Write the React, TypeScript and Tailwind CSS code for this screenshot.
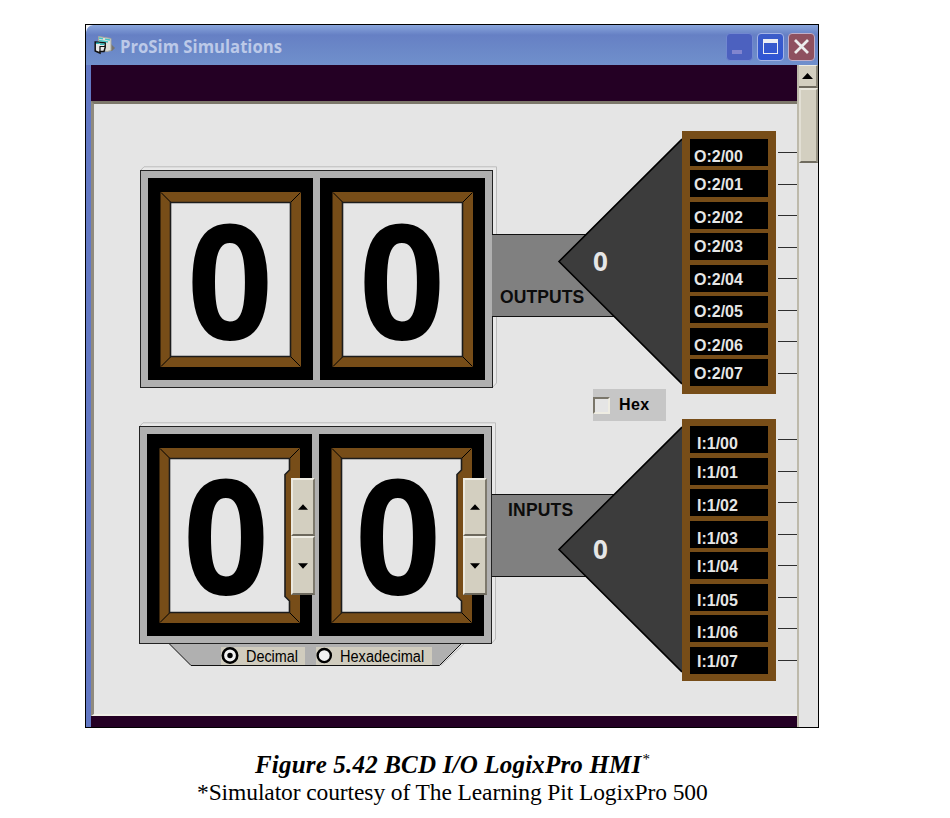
import clsx from "clsx";

interface Terminal {
  name: string;
  offset: string;
}

const outputTerminals: Terminal[] = [
  { name: "O:2/00", offset: "pt-[9px]" },
  { name: "O:2/01", offset: "pt-[6px]" },
  { name: "O:2/02", offset: "pt-[7px]" },
  { name: "O:2/03", offset: "pt-[5px]" },
  { name: "O:2/04", offset: "pt-[6px]" },
  { name: "O:2/05", offset: "pt-[7px]" },
  { name: "O:2/06", offset: "pt-[9px]" },
  { name: "O:2/07", offset: "pt-[6px]" },
];

const inputTerminals: Terminal[] = [
  { name: "I:1/00", offset: "pt-[9px]" },
  { name: "I:1/01", offset: "pt-[6px]" },
  { name: "I:1/02", offset: "pt-[8px]" },
  { name: "I:1/03", offset: "pt-[9px]" },
  { name: "I:1/04", offset: "pt-[6px]" },
  { name: "I:1/05", offset: "pt-[8px]" },
  { name: "I:1/06", offset: "pt-[9px]" },
  { name: "I:1/07", offset: "pt-[6px]" },
];

function AppIcon() {
  return (
    <svg width="23" height="20" viewBox="0 0 23 20">
      <path d="M18 9l4 4-3 3h-3z" fill="#77746e" />
      <path d="M5.500 1.500L18 3.500V15.500L14 16.500L5.500 14z" fill="#deddd8" stroke="#a5a79f" />
      <path d="M6 3l4 .8M12 4.200l5 .8M6 5.500l9 1.500" stroke="#3fc4c6" strokeWidth="1.3" />
      <path d="M2.200 7L12.200 8V12.500L11 16.500H7V18L2.200 16z" fill="#e8e8e8" stroke="#111" strokeWidth="1.5" />
      <path d="M3 8.200h3.500M7 9.300h4.500" stroke="#2fb9bb" strokeWidth="1.400" />
      <path d="M6.500 11.500H12M7 11.500v5" stroke="#111" strokeWidth="1.200" />
    </svg>
  );
}

function TitleBar() {
  return (
    <div className="relative flex h-[40px] items-center bg-linear-to-b from-[#8aa6dc] via-[#6680c4] via-25% to-[#7090cc] pr-[3px] pl-[7px]">
      <svg className="absolute top-0 left-0" width="7" height="7" viewBox="0 0 7 7">
        <path d="M0 0H7Q1 1 0 7z" fill="#f2f3f6" />
      </svg>
      <AppIcon />
      <span className="ml-[4px] grow origin-left scale-x-[0.953] pt-[3px] font-['Open_Sans'] text-[17.5px] font-bold whitespace-nowrap text-[#bcc9e8]">
        ProSim Simulations
      </span>
      <div className="flex gap-[4px] pt-[3px]">
        <div className="relative h-[28px] w-[27px] rounded-[4px] border border-[#7187d0] bg-[#4c61bf]">
          <div className="absolute bottom-[6px] left-[5px] h-[4px] w-[10px] bg-[#8185cf]" />
        </div>
        <div className="flex h-[28px] w-[27px] items-center justify-center rounded-[4px] border border-[#a4b4e6] bg-linear-to-b from-[#3c5cc8] to-[#2f55d4]">
          <div className="h-[15px] w-[15px] border border-t-4 border-[#eceef4]" />
        </div>
        <div className="flex h-[28px] w-[27px] items-center justify-center rounded-[4px] border border-[#c0aec8] bg-[#8e505f]">
          <svg width="17" height="17" viewBox="0 0 17 17">
            <path d="M2 2l13 13M15 2L2 15" stroke="#ececec" strokeWidth="2.8" />
          </svg>
        </div>
      </div>
    </div>
  );
}

function ScrollBar() {
  return (
    <div className="flex w-[21px] flex-col border-l-2 border-[#bdb9aa] bg-[#e4e4e4]">
      <div className="flex h-[23px] items-center justify-center border-t border-r-2 border-b-2 border-t-[#eeece2] border-r-[#8c887a] border-b-[#6f6b5f] bg-[#d3cfc0]">
        <svg width="11" height="6" viewBox="0 0 11 6">
          <path d="M5.5 0L11 6H0z" fill="#000" />
        </svg>
      </div>
      <div className="h-[75px] border-t-2 border-r-2 border-b-2 border-l-2 border-t-[#e8e6dc] border-r-[#9a9688] border-b-[#6f6b5f] border-l-[#e2dfd4] bg-[#d3cfc0]" />
    </div>
  );
}

function SpinButton({ down }: { down?: boolean }) {
  return (
    <button
      className={clsx(
        "flex w-[24px] items-center justify-center border-2 border-t-[#efede4] border-r-[#7d796c] border-b-[#6d695d] border-l-[#ebe9df] bg-[#d3cfc0]",
        down ? "h-[59px]" : "h-[58px]"
      )}
    >
      <svg width="10" height="6" viewBox="0 0 10 6">
        <path d={down ? "M0 .3h10L5 5.7z" : "M5 .3L10 5.7H0z"} fill="#000" />
      </svg>
    </button>
  );
}

function DigitPanel({ value, spin }: { value: number; spin?: boolean }) {
  return (
    <div className="relative h-[202px] w-[165px] bg-black">
      <svg className="absolute inset-0" width="165" height="202" viewBox="0 0 165 202">
        <rect x="12.5" y="14" width="140.5" height="175" fill="#774d18" />
        <path
          d="M13 14.5l10 10M152.5 14.5l-10 10M13 188.5l10-10M152.5 188.5l-10-10"
          stroke="#000"
          strokeWidth="1"
        />
        <path
          d={
            spin
              ? "M22.5 24.5H142.500V36L138 40.500V162.500L142.500 167V178.500H22.500Z"
              : "M22.5 24.5H142.500V178.500H22.500Z"
          }
          fill="#e5e5e5"
          stroke="#1c1c1c"
          strokeWidth="1.6"
        />
      </svg>
      <div
        className={clsx(
          "absolute w-[100px] scale-x-[0.94] text-center font-['Noto_Sans'] text-[160px] leading-[202px] font-bold text-black",
          spin ? "-top-[3px] left-[29px]" : "-top-[2px] left-[32px]"
        )}
      >
        {value}
      </div>
      {spin && (
        <div className="absolute top-[44px] left-[144px] z-10 flex flex-col">
          <SpinButton />
          <SpinButton down />
        </div>
      )}
    </div>
  );
}

function DigitDisplay({ spin }: { spin?: boolean }) {
  return (
    <div className="relative h-[218px] w-[353px]">
      <svg className="absolute -top-[4px] left-0" width="358" height="222" viewBox="0 0 358 222">
        <path d="M.5 4.500L4 .8H356.500V217L352.500 221.500V4.500Z" fill="#e9e9e9" stroke="#bcbcbc" />
      </svg>
      <div className="relative flex gap-[7px] border border-[#222] bg-[#b0b0b0] p-[7px]">
        <DigitPanel value={0} spin={spin} />
        <DigitPanel value={0} spin={spin} />
      </div>
    </div>
  );
}

function RadioMark({ checked }: { checked?: boolean }) {
  return (
    <svg width="18" height="18" viewBox="0 0 18 18">
      <circle cx="9" cy="8.500" r="7.200" fill="#f0f0f0" stroke="#000" strokeWidth="2.600" />
      {checked && <circle cx="9" cy="8.500" r="2.700" fill="#000" />}
    </svg>
  );
}

function RadixTray() {
  return (
    <div className="relative ml-[30px] h-[22px] w-[298px]">
      <svg className="absolute inset-0" width="298" height="23" viewBox="0 0 298 23">
        <path d="M272 21.500L295 0" stroke="#bcbcbc" fill="none" />
        <path d="M.5 0L22 21.500H270.500L292 0" fill="#b0b0b0" stroke="#111" />
      </svg>
      <div className="relative flex gap-[11px] pt-[3px] pl-[52px] font-['Liberation_Sans'] text-[16px] leading-[18px] text-black">
        <label className="flex h-[18px] w-[84px] items-center bg-[#d0ccbe]">
          <RadioMark checked />
          <span className="ml-[7px] origin-left scale-x-90 pt-[1px]">Decimal</span>
        </label>
        <label className="flex h-[18px] w-[116px] items-center bg-[#d0ccbe]">
          <RadioMark />
          <span className="ml-[7px] origin-left scale-x-[0.91] pt-[1px]">Hexadecimal</span>
        </label>
      </div>
    </div>
  );
}

interface ConnectorProps {
  label: string;
  labelClass: string;
  bandTop: number;
}

function Connector({ label, labelClass, bandTop }: ConnectorProps) {
  return (
    <div className="relative h-[252px] w-[190px]">
      <svg className="absolute inset-0" width="190" height="252" viewBox="0 0 190 252">
        <rect x="-1" y={bandTop} width="140" height="82" fill="#808080" stroke="#111" />
        <path d="M190 3L67 125.500L190 248" fill="#3c3c3c" stroke="#000" strokeWidth="1.600" />
      </svg>
      <span
        className={clsx(
          "absolute font-['Liberation_Sans'] text-[17.500px] leading-[20px] font-bold text-[#0c0c0c]",
          labelClass
        )}
      >
        {label}
      </span>
      <span className="absolute top-[110px] left-[101px] font-['Noto_Sans'] text-[26px] leading-[30px] font-bold text-[#e6e6e6]">
        0
      </span>
    </div>
  );
}

function TerminalBlock({ terminals, indent }: { terminals: Terminal[]; indent: string }) {
  return (
    <div className="flex h-[262.5px] w-[94px] flex-col gap-[4.5px] bg-[#774d18] px-[8px] pt-[7.5px]">
      {terminals.map((t) => (
        <div
          key={t.name}
          className={clsx(
            "h-[27px] shrink-0 bg-black font-['Liberation_Sans'] text-[16px] leading-[18px] font-bold text-[#e6e6e6]",
            indent,
            t.offset
          )}
        >
          {t.name}
        </div>
      ))}
    </div>
  );
}

function Wires({ count }: { count: number }) {
  return (
    <div className="flex flex-col">
      {Array.from({ length: count }, (_, i) => (
        <div key={i} className="h-[31.5px]">
          <div className="h-[1.4px] w-[19px] bg-[#2e2e2e]" />
        </div>
      ))}
    </div>
  );
}

export default function App() {
  return (
    <div className="h-[818px] w-[950px] overflow-hidden bg-white pt-[24px]">
      {/* Simulator window */}
      <div className="ml-[85px] flex h-[704px] w-[734px] flex-col border border-black bg-[#6278c4]">
        <TitleBar />
        <div className="flex h-[662px] pl-[5px]">
          <div className="flex w-[706px] flex-col bg-[#240024]">
            <div className="mt-[36px] flex h-[615px] border-t-[3px] border-b-2 border-l-[3px] border-t-[#7c776a] border-b-[#f0f0e8] border-l-[#8f8a7e] bg-[#e5e5e5]">
              {/* Digit displays */}
              <div className="w-[398px] pt-[66px] pl-[45px]">
                <div className="ml-px">
                  <DigitDisplay />
                </div>
                <div className="mt-[38px]">
                  <DigitDisplay spin />
                </div>
                <RadixTray />
              </div>

              {/* Connectors */}
              <div className="relative w-[190px] pt-[32px]">
                <Connector
                  label="OUTPUTS"
                  labelClass="top-[151px] left-[8px] tracking-[0.1px]"
                  bandTop={98.5}
                />
                <label className="mt-px mb-[3px] ml-[101px] flex h-[32px] w-[73px] items-center bg-[#c6c6c6] font-['Liberation_Sans'] text-[16px] font-bold text-black">
                  <span className="h-[17px] w-[17px] border-2 border-t-[#7a766a] border-r-[#eeece2] border-b-[#eeece2] border-l-[#7a766a] bg-[#e5e5e5]" />
                  <span className="ml-[9px] tracking-[0.4px]">Hex</span>
                </label>
                <Connector
                  label="INPUTS"
                  labelClass="top-[76px] left-[16px] tracking-[0.2px]"
                  bandTop={70.5}
                />
              </div>

              {/* Terminal strips */}
              <div className="flex flex-col gap-[25px] pt-[27px]">
                <TerminalBlock terminals={outputTerminals} indent="pl-[4px]" />
                <TerminalBlock terminals={inputTerminals} indent="pl-[7px]" />
              </div>

              <div className="flex flex-col gap-[35px] pt-[48px] pl-[2px]">
                <Wires count={8} />
                <Wires count={8} />
              </div>
            </div>
          </div>
          <ScrollBar />
        </div>
      </div>

      {/* Caption */}
      <div className="pt-[23px] font-['Liberation_Serif'] whitespace-nowrap text-black">
        <p className="ml-[255px] text-[25px] leading-[28px] font-bold tracking-[0.18px] italic">
          Figure 5.42 BCD I/O LogixPro HMI
          <sup className="top-[-9px] ml-px text-[15px] font-medium not-italic">*</sup>
        </p>
        <p className="-mt-px ml-[197px] text-[23.5px] leading-[28px] tracking-[-0.1px]">
          *Simulator courtesy of The Learning Pit LogixPro 500
        </p>
      </div>
    </div>
  );
}
